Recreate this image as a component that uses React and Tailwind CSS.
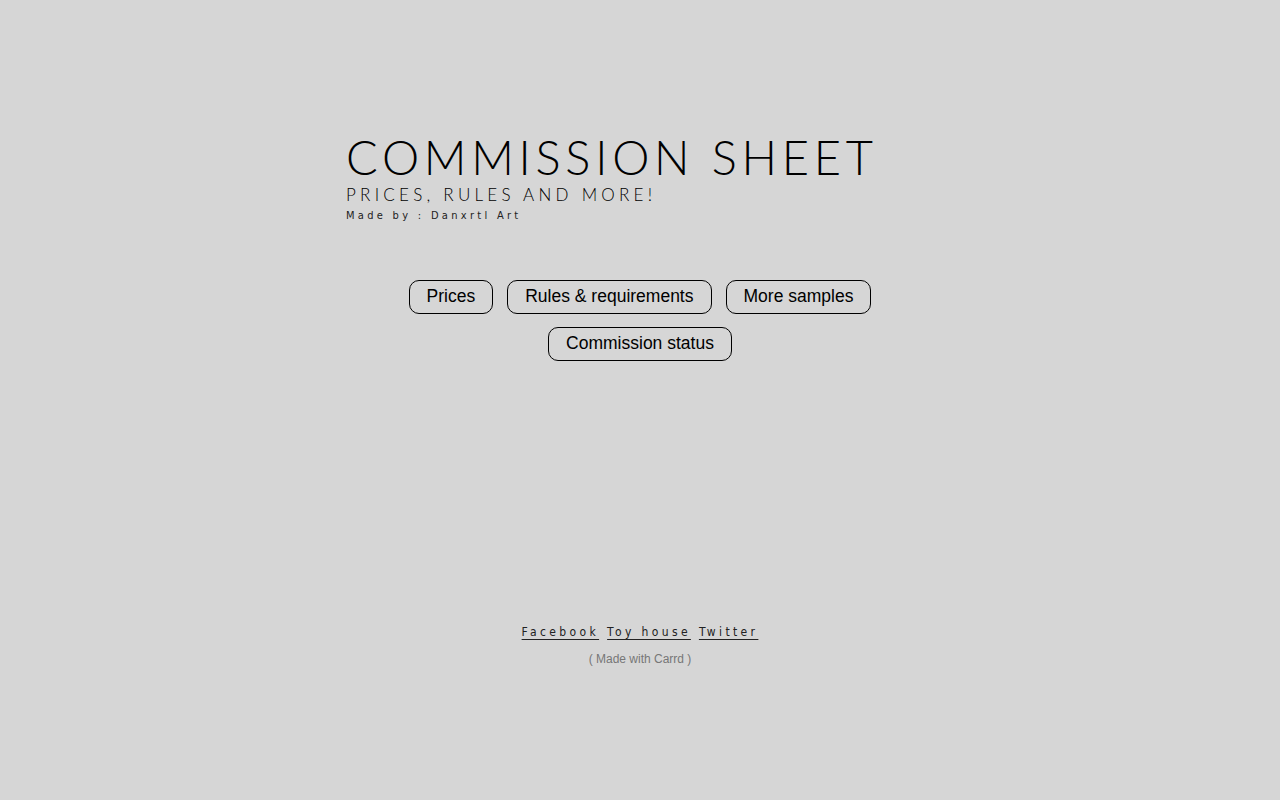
export default function App() {
  const btn =
    "h-[34px] px-[17px] rounded-[10px] border border-black text-[17.5px] text-black flex items-center leading-none";
  const narrow = { fontFamily: '"DejaVu Sans Condensed", "Liberation Sans", sans-serif' };
  const thin = { fontFamily: 'Lato, "Liberation Sans", sans-serif' };
  return (
    <div className="min-h-[800px] w-full bg-[#d6d6d6] flex flex-col items-center" style={{ fontFamily: '"Liberation Sans", Arial, sans-serif' }}>
      <div className="w-[588px] mt-[132px]">
        <h1
          className="text-[47px] leading-[50px] tracking-[0.1em] text-black font-light whitespace-nowrap"
          style={thin}
        >
          COMMISSION SHEET
        </h1>
        <div
          className="text-[17px] leading-[22px] tracking-[0.25em] text-black font-light whitespace-nowrap mt-[2px]"
          style={thin}
        >
          PRICES, RULES AND MORE!
        </div>
        <div
          className="text-[11px] leading-[16px] tracking-[0.3em] text-[#222] whitespace-nowrap mt-[2px]"
          style={narrow}
        >
          Made by : Danxrtl Art
        </div>
      </div>
      <div className="mt-[56px] flex flex-col items-center gap-[13px]">
        <div className="flex gap-[14px]">
          <a className={btn}>Prices</a>
          <a className={btn}>Rules &amp; requirements</a>
          <a className={btn}>More samples</a>
        </div>
        <a className={btn}>Commission status</a>
      </div>
      <div
        className="mt-[263px] flex gap-[8px] text-[12px] leading-[16px] tracking-[0.28em] text-[#222]"
        style={narrow}
      >
        <a className="underline underline-offset-[3px]">Facebook</a>
        <a className="underline underline-offset-[3px]">Toy house</a>
        <a className="underline underline-offset-[3px]">Twitter</a>
      </div>
      <div className="mt-[10px] text-[12px] text-[#777]">( Made with Carrd )</div>
    </div>
  );
}
